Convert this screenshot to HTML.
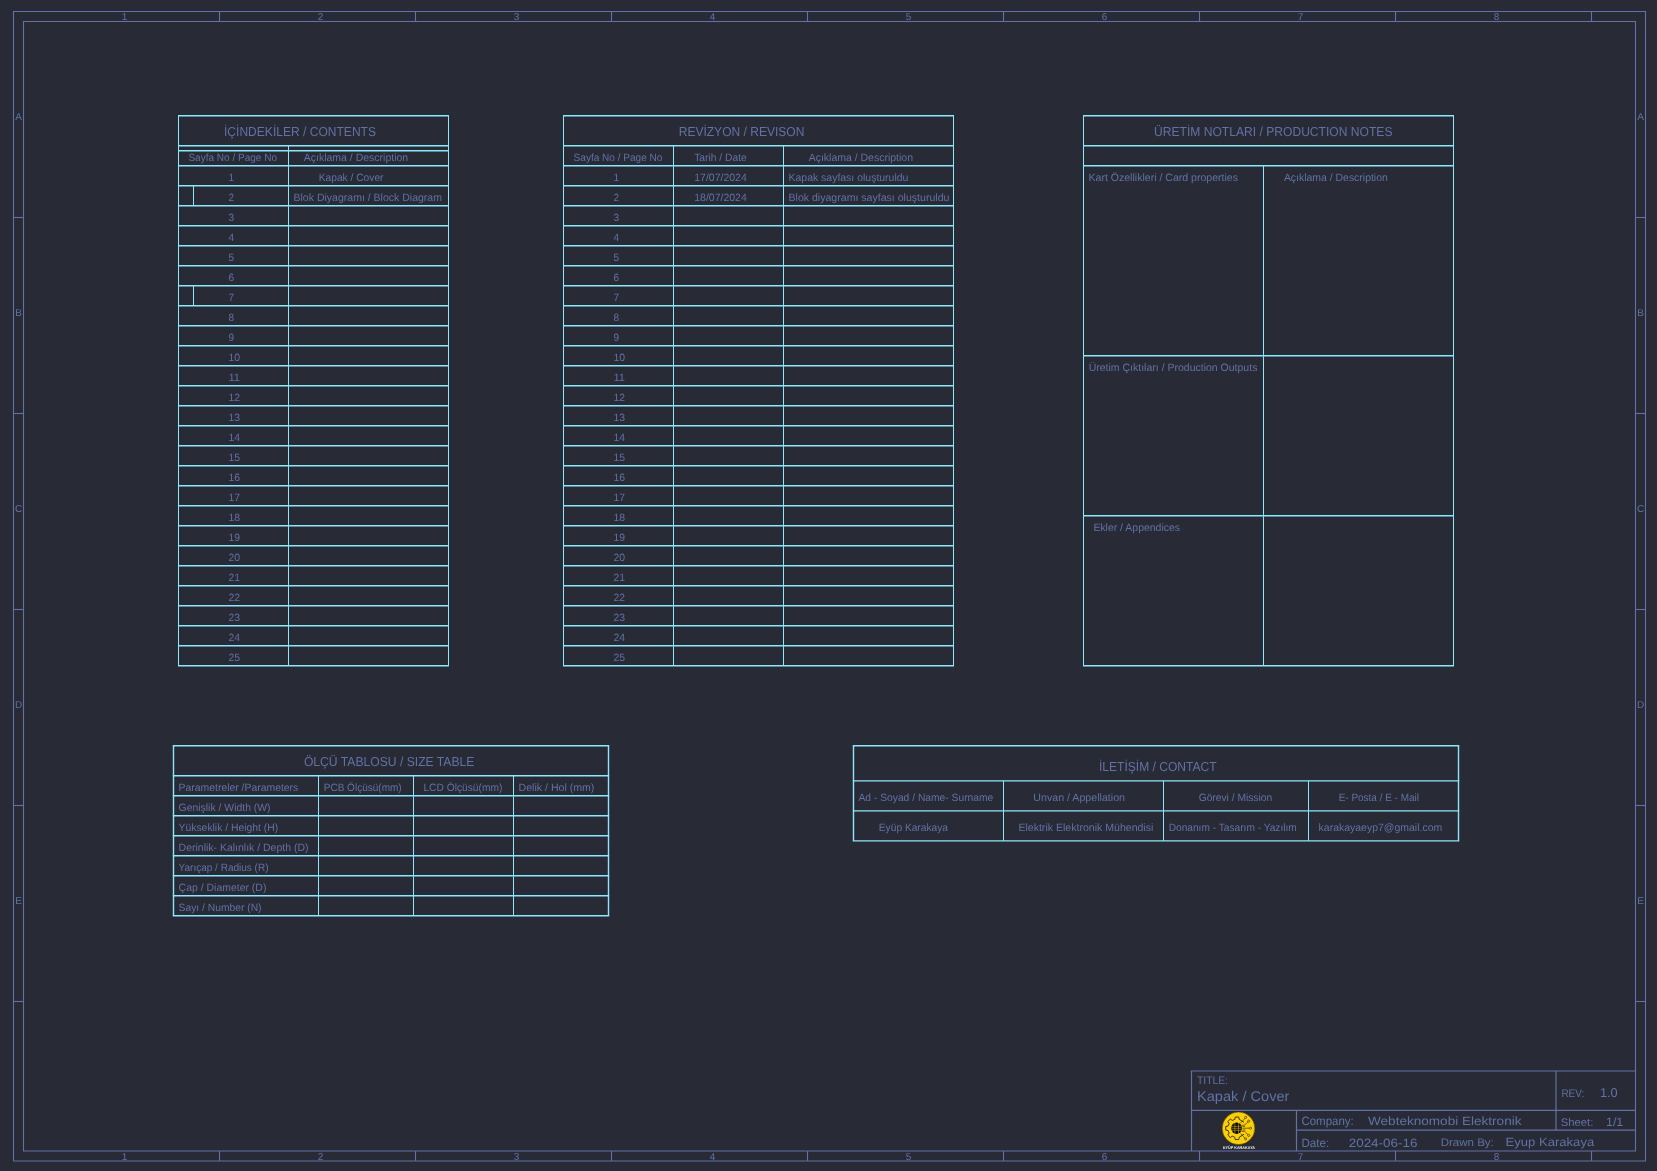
<!DOCTYPE html>
<html><head><meta charset="utf-8"><style>
html,body{margin:0;padding:0;background:#282a36;}
body{width:1657px;height:1171px;overflow:hidden;}
svg{display:block;will-change:transform;text-rendering:geometricPrecision;font-family:"Liberation Sans",sans-serif;}
</style></head><body>
<svg width="1657" height="1171" viewBox="0 0 1657 1171">
<rect x="0" y="0" width="1657" height="1171" fill="#282a36"/>
<line x1="12.95" y1="11.5" x2="1646.05" y2="11.5" stroke="#6272a4" stroke-width="1.1" stroke-linecap="butt"/>
<line x1="13.5" y1="11.5" x2="13.5" y2="1161" stroke="#6272a4" stroke-width="1.1" stroke-linecap="butt"/>
<line x1="1645.5" y1="11.5" x2="1645.5" y2="1161" stroke="#6272a4" stroke-width="1.1" stroke-linecap="butt"/>
<line x1="12.95" y1="1161" x2="1646.05" y2="1161" stroke="#6272a4" stroke-width="1.1" stroke-linecap="butt"/>
<line x1="22.95" y1="21.5" x2="1636.05" y2="21.5" stroke="#6272a4" stroke-width="1.1" stroke-linecap="butt"/>
<line x1="23.5" y1="21.5" x2="23.5" y2="1151" stroke="#6272a4" stroke-width="1.1" stroke-linecap="butt"/>
<line x1="1635.5" y1="21.5" x2="1635.5" y2="1151" stroke="#6272a4" stroke-width="1.1" stroke-linecap="butt"/>
<line x1="22.95" y1="1151" x2="1636.05" y2="1151" stroke="#6272a4" stroke-width="1.1" stroke-linecap="butt"/>
<line x1="219.5" y1="11.5" x2="219.5" y2="21.5" stroke="#6272a4" stroke-width="1.1" stroke-linecap="butt"/>
<line x1="219.5" y1="1151" x2="219.5" y2="1161" stroke="#6272a4" stroke-width="1.1" stroke-linecap="butt"/>
<line x1="415.5" y1="11.5" x2="415.5" y2="21.5" stroke="#6272a4" stroke-width="1.1" stroke-linecap="butt"/>
<line x1="415.5" y1="1151" x2="415.5" y2="1161" stroke="#6272a4" stroke-width="1.1" stroke-linecap="butt"/>
<line x1="611.5" y1="11.5" x2="611.5" y2="21.5" stroke="#6272a4" stroke-width="1.1" stroke-linecap="butt"/>
<line x1="611.5" y1="1151" x2="611.5" y2="1161" stroke="#6272a4" stroke-width="1.1" stroke-linecap="butt"/>
<line x1="807.5" y1="11.5" x2="807.5" y2="21.5" stroke="#6272a4" stroke-width="1.1" stroke-linecap="butt"/>
<line x1="807.5" y1="1151" x2="807.5" y2="1161" stroke="#6272a4" stroke-width="1.1" stroke-linecap="butt"/>
<line x1="1003.5" y1="11.5" x2="1003.5" y2="21.5" stroke="#6272a4" stroke-width="1.1" stroke-linecap="butt"/>
<line x1="1003.5" y1="1151" x2="1003.5" y2="1161" stroke="#6272a4" stroke-width="1.1" stroke-linecap="butt"/>
<line x1="1199.5" y1="11.5" x2="1199.5" y2="21.5" stroke="#6272a4" stroke-width="1.1" stroke-linecap="butt"/>
<line x1="1199.5" y1="1151" x2="1199.5" y2="1161" stroke="#6272a4" stroke-width="1.1" stroke-linecap="butt"/>
<line x1="1395.5" y1="11.5" x2="1395.5" y2="21.5" stroke="#6272a4" stroke-width="1.1" stroke-linecap="butt"/>
<line x1="1395.5" y1="1151" x2="1395.5" y2="1161" stroke="#6272a4" stroke-width="1.1" stroke-linecap="butt"/>
<line x1="1591.5" y1="11.5" x2="1591.5" y2="21.5" stroke="#6272a4" stroke-width="1.1" stroke-linecap="butt"/>
<line x1="1591.5" y1="1151" x2="1591.5" y2="1161" stroke="#6272a4" stroke-width="1.1" stroke-linecap="butt"/>
<line x1="12.95" y1="217.5" x2="24.05" y2="217.5" stroke="#6272a4" stroke-width="1.1" stroke-linecap="butt"/>
<line x1="1634.95" y1="217.5" x2="1646.05" y2="217.5" stroke="#6272a4" stroke-width="1.1" stroke-linecap="butt"/>
<line x1="12.95" y1="413.5" x2="24.05" y2="413.5" stroke="#6272a4" stroke-width="1.1" stroke-linecap="butt"/>
<line x1="1634.95" y1="413.5" x2="1646.05" y2="413.5" stroke="#6272a4" stroke-width="1.1" stroke-linecap="butt"/>
<line x1="12.95" y1="609.5" x2="24.05" y2="609.5" stroke="#6272a4" stroke-width="1.1" stroke-linecap="butt"/>
<line x1="1634.95" y1="609.5" x2="1646.05" y2="609.5" stroke="#6272a4" stroke-width="1.1" stroke-linecap="butt"/>
<line x1="12.95" y1="805.5" x2="24.05" y2="805.5" stroke="#6272a4" stroke-width="1.1" stroke-linecap="butt"/>
<line x1="1634.95" y1="805.5" x2="1646.05" y2="805.5" stroke="#6272a4" stroke-width="1.1" stroke-linecap="butt"/>
<line x1="12.95" y1="1001.5" x2="24.05" y2="1001.5" stroke="#6272a4" stroke-width="1.1" stroke-linecap="butt"/>
<line x1="1634.95" y1="1001.5" x2="1646.05" y2="1001.5" stroke="#6272a4" stroke-width="1.1" stroke-linecap="butt"/>
<text x="124.5" y="20" font-size="10.00" fill="#6272a4" text-anchor="middle">1</text>
<text x="124.5" y="1159.5" font-size="10.00" fill="#6272a4" text-anchor="middle">1</text>
<text x="320.5" y="20" font-size="10.00" fill="#6272a4" text-anchor="middle">2</text>
<text x="320.5" y="1159.5" font-size="10.00" fill="#6272a4" text-anchor="middle">2</text>
<text x="516.5" y="20" font-size="10.00" fill="#6272a4" text-anchor="middle">3</text>
<text x="516.5" y="1159.5" font-size="10.00" fill="#6272a4" text-anchor="middle">3</text>
<text x="712.5" y="20" font-size="10.00" fill="#6272a4" text-anchor="middle">4</text>
<text x="712.5" y="1159.5" font-size="10.00" fill="#6272a4" text-anchor="middle">4</text>
<text x="908.5" y="20" font-size="10.00" fill="#6272a4" text-anchor="middle">5</text>
<text x="908.5" y="1159.5" font-size="10.00" fill="#6272a4" text-anchor="middle">5</text>
<text x="1104.5" y="20" font-size="10.00" fill="#6272a4" text-anchor="middle">6</text>
<text x="1104.5" y="1159.5" font-size="10.00" fill="#6272a4" text-anchor="middle">6</text>
<text x="1300.5" y="20" font-size="10.00" fill="#6272a4" text-anchor="middle">7</text>
<text x="1300.5" y="1159.5" font-size="10.00" fill="#6272a4" text-anchor="middle">7</text>
<text x="1496.5" y="20" font-size="10.00" fill="#6272a4" text-anchor="middle">8</text>
<text x="1496.5" y="1159.5" font-size="10.00" fill="#6272a4" text-anchor="middle">8</text>
<text x="18.5" y="119.5" font-size="10.00" fill="#6272a4" text-anchor="middle">A</text>
<text x="1640.5" y="119.5" font-size="10.00" fill="#6272a4" text-anchor="middle">A</text>
<text x="18.5" y="315.5" font-size="10.00" fill="#6272a4" text-anchor="middle">B</text>
<text x="1640.5" y="315.5" font-size="10.00" fill="#6272a4" text-anchor="middle">B</text>
<text x="18.5" y="511.5" font-size="10.00" fill="#6272a4" text-anchor="middle">C</text>
<text x="1640.5" y="511.5" font-size="10.00" fill="#6272a4" text-anchor="middle">C</text>
<text x="18.5" y="707.5" font-size="10.00" fill="#6272a4" text-anchor="middle">D</text>
<text x="1640.5" y="707.5" font-size="10.00" fill="#6272a4" text-anchor="middle">D</text>
<text x="18.5" y="903.5" font-size="10.00" fill="#6272a4" text-anchor="middle">E</text>
<text x="1640.5" y="903.5" font-size="10.00" fill="#6272a4" text-anchor="middle">E</text>
<line x1="178.0" y1="115.7" x2="449.0" y2="115.7" stroke="#8be9fd" stroke-width="1.4" stroke-linecap="butt"/>
<line x1="178.0" y1="665.7" x2="449.0" y2="665.7" stroke="#8be9fd" stroke-width="1.4" stroke-linecap="butt"/>
<line x1="178.5" y1="115.5" x2="178.5" y2="665.5" stroke="#8be9fd" stroke-width="1.0" stroke-linecap="butt"/>
<line x1="448.5" y1="115.5" x2="448.5" y2="665.5" stroke="#8be9fd" stroke-width="1.0" stroke-linecap="butt"/>
<line x1="178.0" y1="145.7" x2="449.0" y2="145.7" stroke="#8be9fd" stroke-width="1.4" stroke-linecap="butt"/>
<line x1="178.0" y1="150.7" x2="449.0" y2="150.7" stroke="#8be9fd" stroke-width="1.4" stroke-linecap="butt"/>
<line x1="178.0" y1="165.7" x2="449.0" y2="165.7" stroke="#8be9fd" stroke-width="1.4" stroke-linecap="butt"/>
<line x1="178.0" y1="185.7" x2="449.0" y2="185.7" stroke="#8be9fd" stroke-width="1.4" stroke-linecap="butt"/>
<line x1="178.0" y1="205.7" x2="449.0" y2="205.7" stroke="#8be9fd" stroke-width="1.4" stroke-linecap="butt"/>
<line x1="178.0" y1="225.7" x2="449.0" y2="225.7" stroke="#8be9fd" stroke-width="1.4" stroke-linecap="butt"/>
<line x1="178.0" y1="245.7" x2="449.0" y2="245.7" stroke="#8be9fd" stroke-width="1.4" stroke-linecap="butt"/>
<line x1="178.0" y1="265.7" x2="449.0" y2="265.7" stroke="#8be9fd" stroke-width="1.4" stroke-linecap="butt"/>
<line x1="178.0" y1="285.7" x2="449.0" y2="285.7" stroke="#8be9fd" stroke-width="1.4" stroke-linecap="butt"/>
<line x1="178.0" y1="305.7" x2="449.0" y2="305.7" stroke="#8be9fd" stroke-width="1.4" stroke-linecap="butt"/>
<line x1="178.0" y1="325.7" x2="449.0" y2="325.7" stroke="#8be9fd" stroke-width="1.4" stroke-linecap="butt"/>
<line x1="178.0" y1="345.7" x2="449.0" y2="345.7" stroke="#8be9fd" stroke-width="1.4" stroke-linecap="butt"/>
<line x1="178.0" y1="365.7" x2="449.0" y2="365.7" stroke="#8be9fd" stroke-width="1.4" stroke-linecap="butt"/>
<line x1="178.0" y1="385.7" x2="449.0" y2="385.7" stroke="#8be9fd" stroke-width="1.4" stroke-linecap="butt"/>
<line x1="178.0" y1="405.7" x2="449.0" y2="405.7" stroke="#8be9fd" stroke-width="1.4" stroke-linecap="butt"/>
<line x1="178.0" y1="425.7" x2="449.0" y2="425.7" stroke="#8be9fd" stroke-width="1.4" stroke-linecap="butt"/>
<line x1="178.0" y1="445.7" x2="449.0" y2="445.7" stroke="#8be9fd" stroke-width="1.4" stroke-linecap="butt"/>
<line x1="178.0" y1="465.7" x2="449.0" y2="465.7" stroke="#8be9fd" stroke-width="1.4" stroke-linecap="butt"/>
<line x1="178.0" y1="485.7" x2="449.0" y2="485.7" stroke="#8be9fd" stroke-width="1.4" stroke-linecap="butt"/>
<line x1="178.0" y1="505.7" x2="449.0" y2="505.7" stroke="#8be9fd" stroke-width="1.4" stroke-linecap="butt"/>
<line x1="178.0" y1="525.7" x2="449.0" y2="525.7" stroke="#8be9fd" stroke-width="1.4" stroke-linecap="butt"/>
<line x1="178.0" y1="545.7" x2="449.0" y2="545.7" stroke="#8be9fd" stroke-width="1.4" stroke-linecap="butt"/>
<line x1="178.0" y1="565.7" x2="449.0" y2="565.7" stroke="#8be9fd" stroke-width="1.4" stroke-linecap="butt"/>
<line x1="178.0" y1="585.7" x2="449.0" y2="585.7" stroke="#8be9fd" stroke-width="1.4" stroke-linecap="butt"/>
<line x1="178.0" y1="605.7" x2="449.0" y2="605.7" stroke="#8be9fd" stroke-width="1.4" stroke-linecap="butt"/>
<line x1="178.0" y1="625.7" x2="449.0" y2="625.7" stroke="#8be9fd" stroke-width="1.4" stroke-linecap="butt"/>
<line x1="178.0" y1="645.7" x2="449.0" y2="645.7" stroke="#8be9fd" stroke-width="1.4" stroke-linecap="butt"/>
<line x1="288.5" y1="145.5" x2="288.5" y2="665.5" stroke="#8be9fd" stroke-width="1.0" stroke-linecap="butt"/>
<line x1="193.5" y1="185.5" x2="193.5" y2="205.5" stroke="#8be9fd" stroke-width="1.0" stroke-linecap="butt"/>
<line x1="193.5" y1="285.5" x2="193.5" y2="305.5" stroke="#8be9fd" stroke-width="1.0" stroke-linecap="butt"/>
<text x="224" y="136" font-size="13.04" fill="#6272a4" textLength="152.0" lengthAdjust="spacingAndGlyphs">İÇİNDEKİLER / CONTENTS</text>
<text x="188.4" y="161" font-size="10.58" fill="#6272a4" textLength="88.6" lengthAdjust="spacingAndGlyphs">Sayfa No / Page No</text>
<text x="303.8" y="161" font-size="10.58" fill="#6272a4" textLength="104.4" lengthAdjust="spacingAndGlyphs">Açıklama / Description</text>
<text x="318.7" y="181" font-size="10.58" fill="#6272a4" textLength="64.8" lengthAdjust="spacingAndGlyphs">Kapak / Cover</text>
<text x="293.5" y="201" font-size="10.58" fill="#6272a4" textLength="148.5" lengthAdjust="spacingAndGlyphs">Blok Diyagramı / Block Diagram</text>
<text x="228.4" y="181" font-size="10.58" fill="#6272a4" textLength="5.6" lengthAdjust="spacingAndGlyphs">1</text>
<text x="228.4" y="201" font-size="10.58" fill="#6272a4" textLength="5.6" lengthAdjust="spacingAndGlyphs">2</text>
<text x="228.4" y="221" font-size="10.58" fill="#6272a4" textLength="5.6" lengthAdjust="spacingAndGlyphs">3</text>
<text x="228.4" y="241" font-size="10.58" fill="#6272a4" textLength="5.6" lengthAdjust="spacingAndGlyphs">4</text>
<text x="228.4" y="261" font-size="10.58" fill="#6272a4" textLength="5.6" lengthAdjust="spacingAndGlyphs">5</text>
<text x="228.4" y="281" font-size="10.58" fill="#6272a4" textLength="5.6" lengthAdjust="spacingAndGlyphs">6</text>
<text x="228.4" y="301" font-size="10.58" fill="#6272a4" textLength="5.6" lengthAdjust="spacingAndGlyphs">7</text>
<text x="228.4" y="321" font-size="10.58" fill="#6272a4" textLength="5.6" lengthAdjust="spacingAndGlyphs">8</text>
<text x="228.4" y="341" font-size="10.58" fill="#6272a4" textLength="5.6" lengthAdjust="spacingAndGlyphs">9</text>
<text x="228.4" y="361" font-size="10.58" fill="#6272a4" textLength="11.6" lengthAdjust="spacingAndGlyphs">10</text>
<text x="228.4" y="381" font-size="10.58" fill="#6272a4" textLength="11.6" lengthAdjust="spacingAndGlyphs">11</text>
<text x="228.4" y="401" font-size="10.58" fill="#6272a4" textLength="11.6" lengthAdjust="spacingAndGlyphs">12</text>
<text x="228.4" y="421" font-size="10.58" fill="#6272a4" textLength="11.6" lengthAdjust="spacingAndGlyphs">13</text>
<text x="228.4" y="441" font-size="10.58" fill="#6272a4" textLength="11.6" lengthAdjust="spacingAndGlyphs">14</text>
<text x="228.4" y="461" font-size="10.58" fill="#6272a4" textLength="11.6" lengthAdjust="spacingAndGlyphs">15</text>
<text x="228.4" y="481" font-size="10.58" fill="#6272a4" textLength="11.6" lengthAdjust="spacingAndGlyphs">16</text>
<text x="228.4" y="501" font-size="10.58" fill="#6272a4" textLength="11.6" lengthAdjust="spacingAndGlyphs">17</text>
<text x="228.4" y="521" font-size="10.58" fill="#6272a4" textLength="11.6" lengthAdjust="spacingAndGlyphs">18</text>
<text x="228.4" y="541" font-size="10.58" fill="#6272a4" textLength="11.6" lengthAdjust="spacingAndGlyphs">19</text>
<text x="228.4" y="561" font-size="10.58" fill="#6272a4" textLength="11.6" lengthAdjust="spacingAndGlyphs">20</text>
<text x="228.4" y="581" font-size="10.58" fill="#6272a4" textLength="11.6" lengthAdjust="spacingAndGlyphs">21</text>
<text x="228.4" y="601" font-size="10.58" fill="#6272a4" textLength="11.6" lengthAdjust="spacingAndGlyphs">22</text>
<text x="228.4" y="621" font-size="10.58" fill="#6272a4" textLength="11.6" lengthAdjust="spacingAndGlyphs">23</text>
<text x="228.4" y="641" font-size="10.58" fill="#6272a4" textLength="11.6" lengthAdjust="spacingAndGlyphs">24</text>
<text x="228.4" y="661" font-size="10.58" fill="#6272a4" textLength="11.6" lengthAdjust="spacingAndGlyphs">25</text>
<line x1="563.0" y1="115.7" x2="954.0" y2="115.7" stroke="#8be9fd" stroke-width="1.4" stroke-linecap="butt"/>
<line x1="563.0" y1="665.7" x2="954.0" y2="665.7" stroke="#8be9fd" stroke-width="1.4" stroke-linecap="butt"/>
<line x1="563.5" y1="115.5" x2="563.5" y2="665.5" stroke="#8be9fd" stroke-width="1.0" stroke-linecap="butt"/>
<line x1="953.5" y1="115.5" x2="953.5" y2="665.5" stroke="#8be9fd" stroke-width="1.0" stroke-linecap="butt"/>
<line x1="563.0" y1="145.7" x2="954.0" y2="145.7" stroke="#8be9fd" stroke-width="1.4" stroke-linecap="butt"/>
<line x1="563.0" y1="165.7" x2="954.0" y2="165.7" stroke="#8be9fd" stroke-width="1.4" stroke-linecap="butt"/>
<line x1="563.0" y1="185.7" x2="954.0" y2="185.7" stroke="#8be9fd" stroke-width="1.4" stroke-linecap="butt"/>
<line x1="563.0" y1="205.7" x2="954.0" y2="205.7" stroke="#8be9fd" stroke-width="1.4" stroke-linecap="butt"/>
<line x1="563.0" y1="225.7" x2="954.0" y2="225.7" stroke="#8be9fd" stroke-width="1.4" stroke-linecap="butt"/>
<line x1="563.0" y1="245.7" x2="954.0" y2="245.7" stroke="#8be9fd" stroke-width="1.4" stroke-linecap="butt"/>
<line x1="563.0" y1="265.7" x2="954.0" y2="265.7" stroke="#8be9fd" stroke-width="1.4" stroke-linecap="butt"/>
<line x1="563.0" y1="285.7" x2="954.0" y2="285.7" stroke="#8be9fd" stroke-width="1.4" stroke-linecap="butt"/>
<line x1="563.0" y1="305.7" x2="954.0" y2="305.7" stroke="#8be9fd" stroke-width="1.4" stroke-linecap="butt"/>
<line x1="563.0" y1="325.7" x2="954.0" y2="325.7" stroke="#8be9fd" stroke-width="1.4" stroke-linecap="butt"/>
<line x1="563.0" y1="345.7" x2="954.0" y2="345.7" stroke="#8be9fd" stroke-width="1.4" stroke-linecap="butt"/>
<line x1="563.0" y1="365.7" x2="954.0" y2="365.7" stroke="#8be9fd" stroke-width="1.4" stroke-linecap="butt"/>
<line x1="563.0" y1="385.7" x2="954.0" y2="385.7" stroke="#8be9fd" stroke-width="1.4" stroke-linecap="butt"/>
<line x1="563.0" y1="405.7" x2="954.0" y2="405.7" stroke="#8be9fd" stroke-width="1.4" stroke-linecap="butt"/>
<line x1="563.0" y1="425.7" x2="954.0" y2="425.7" stroke="#8be9fd" stroke-width="1.4" stroke-linecap="butt"/>
<line x1="563.0" y1="445.7" x2="954.0" y2="445.7" stroke="#8be9fd" stroke-width="1.4" stroke-linecap="butt"/>
<line x1="563.0" y1="465.7" x2="954.0" y2="465.7" stroke="#8be9fd" stroke-width="1.4" stroke-linecap="butt"/>
<line x1="563.0" y1="485.7" x2="954.0" y2="485.7" stroke="#8be9fd" stroke-width="1.4" stroke-linecap="butt"/>
<line x1="563.0" y1="505.7" x2="954.0" y2="505.7" stroke="#8be9fd" stroke-width="1.4" stroke-linecap="butt"/>
<line x1="563.0" y1="525.7" x2="954.0" y2="525.7" stroke="#8be9fd" stroke-width="1.4" stroke-linecap="butt"/>
<line x1="563.0" y1="545.7" x2="954.0" y2="545.7" stroke="#8be9fd" stroke-width="1.4" stroke-linecap="butt"/>
<line x1="563.0" y1="565.7" x2="954.0" y2="565.7" stroke="#8be9fd" stroke-width="1.4" stroke-linecap="butt"/>
<line x1="563.0" y1="585.7" x2="954.0" y2="585.7" stroke="#8be9fd" stroke-width="1.4" stroke-linecap="butt"/>
<line x1="563.0" y1="605.7" x2="954.0" y2="605.7" stroke="#8be9fd" stroke-width="1.4" stroke-linecap="butt"/>
<line x1="563.0" y1="625.7" x2="954.0" y2="625.7" stroke="#8be9fd" stroke-width="1.4" stroke-linecap="butt"/>
<line x1="563.0" y1="645.7" x2="954.0" y2="645.7" stroke="#8be9fd" stroke-width="1.4" stroke-linecap="butt"/>
<line x1="673.5" y1="145.5" x2="673.5" y2="665.5" stroke="#8be9fd" stroke-width="1.0" stroke-linecap="butt"/>
<line x1="783.5" y1="145.5" x2="783.5" y2="665.5" stroke="#8be9fd" stroke-width="1.0" stroke-linecap="butt"/>
<text x="678.7" y="136" font-size="13.04" fill="#6272a4" textLength="125.7" lengthAdjust="spacingAndGlyphs">REVİZYON / REVISON</text>
<text x="573.6" y="161" font-size="10.58" fill="#6272a4" textLength="88.8" lengthAdjust="spacingAndGlyphs">Sayfa No / Page No</text>
<text x="694.2" y="161" font-size="10.58" fill="#6272a4" textLength="52.6" lengthAdjust="spacingAndGlyphs">Tarih / Date</text>
<text x="808.7" y="161" font-size="10.58" fill="#6272a4" textLength="104.3" lengthAdjust="spacingAndGlyphs">Açıklama / Description</text>
<text x="694.2" y="181" font-size="10.58" fill="#6272a4" textLength="52.6" lengthAdjust="spacingAndGlyphs">17/07/2024</text>
<text x="694.2" y="201" font-size="10.58" fill="#6272a4" textLength="52.6" lengthAdjust="spacingAndGlyphs">18/07/2024</text>
<text x="788.5" y="181" font-size="10.58" fill="#6272a4" textLength="119.9" lengthAdjust="spacingAndGlyphs">Kapak sayfası oluşturuldu</text>
<text x="788.5" y="201" font-size="10.58" fill="#6272a4" textLength="160.9" lengthAdjust="spacingAndGlyphs">Blok diyagramı sayfası oluşturuldu</text>
<text x="613.4" y="181" font-size="10.58" fill="#6272a4" textLength="5.6" lengthAdjust="spacingAndGlyphs">1</text>
<text x="613.4" y="201" font-size="10.58" fill="#6272a4" textLength="5.6" lengthAdjust="spacingAndGlyphs">2</text>
<text x="613.4" y="221" font-size="10.58" fill="#6272a4" textLength="5.6" lengthAdjust="spacingAndGlyphs">3</text>
<text x="613.4" y="241" font-size="10.58" fill="#6272a4" textLength="5.6" lengthAdjust="spacingAndGlyphs">4</text>
<text x="613.4" y="261" font-size="10.58" fill="#6272a4" textLength="5.6" lengthAdjust="spacingAndGlyphs">5</text>
<text x="613.4" y="281" font-size="10.58" fill="#6272a4" textLength="5.6" lengthAdjust="spacingAndGlyphs">6</text>
<text x="613.4" y="301" font-size="10.58" fill="#6272a4" textLength="5.6" lengthAdjust="spacingAndGlyphs">7</text>
<text x="613.4" y="321" font-size="10.58" fill="#6272a4" textLength="5.6" lengthAdjust="spacingAndGlyphs">8</text>
<text x="613.4" y="341" font-size="10.58" fill="#6272a4" textLength="5.6" lengthAdjust="spacingAndGlyphs">9</text>
<text x="613.4" y="361" font-size="10.58" fill="#6272a4" textLength="11.6" lengthAdjust="spacingAndGlyphs">10</text>
<text x="613.4" y="381" font-size="10.58" fill="#6272a4" textLength="11.6" lengthAdjust="spacingAndGlyphs">11</text>
<text x="613.4" y="401" font-size="10.58" fill="#6272a4" textLength="11.6" lengthAdjust="spacingAndGlyphs">12</text>
<text x="613.4" y="421" font-size="10.58" fill="#6272a4" textLength="11.6" lengthAdjust="spacingAndGlyphs">13</text>
<text x="613.4" y="441" font-size="10.58" fill="#6272a4" textLength="11.6" lengthAdjust="spacingAndGlyphs">14</text>
<text x="613.4" y="461" font-size="10.58" fill="#6272a4" textLength="11.6" lengthAdjust="spacingAndGlyphs">15</text>
<text x="613.4" y="481" font-size="10.58" fill="#6272a4" textLength="11.6" lengthAdjust="spacingAndGlyphs">16</text>
<text x="613.4" y="501" font-size="10.58" fill="#6272a4" textLength="11.6" lengthAdjust="spacingAndGlyphs">17</text>
<text x="613.4" y="521" font-size="10.58" fill="#6272a4" textLength="11.6" lengthAdjust="spacingAndGlyphs">18</text>
<text x="613.4" y="541" font-size="10.58" fill="#6272a4" textLength="11.6" lengthAdjust="spacingAndGlyphs">19</text>
<text x="613.4" y="561" font-size="10.58" fill="#6272a4" textLength="11.6" lengthAdjust="spacingAndGlyphs">20</text>
<text x="613.4" y="581" font-size="10.58" fill="#6272a4" textLength="11.6" lengthAdjust="spacingAndGlyphs">21</text>
<text x="613.4" y="601" font-size="10.58" fill="#6272a4" textLength="11.6" lengthAdjust="spacingAndGlyphs">22</text>
<text x="613.4" y="621" font-size="10.58" fill="#6272a4" textLength="11.6" lengthAdjust="spacingAndGlyphs">23</text>
<text x="613.4" y="641" font-size="10.58" fill="#6272a4" textLength="11.6" lengthAdjust="spacingAndGlyphs">24</text>
<text x="613.4" y="661" font-size="10.58" fill="#6272a4" textLength="11.6" lengthAdjust="spacingAndGlyphs">25</text>
<line x1="1083.0" y1="115.7" x2="1454.0" y2="115.7" stroke="#8be9fd" stroke-width="1.4" stroke-linecap="butt"/>
<line x1="1083.0" y1="665.7" x2="1454.0" y2="665.7" stroke="#8be9fd" stroke-width="1.4" stroke-linecap="butt"/>
<line x1="1083.5" y1="115.5" x2="1083.5" y2="665.5" stroke="#8be9fd" stroke-width="1.0" stroke-linecap="butt"/>
<line x1="1453.5" y1="115.5" x2="1453.5" y2="665.5" stroke="#8be9fd" stroke-width="1.0" stroke-linecap="butt"/>
<line x1="1083.0" y1="145.7" x2="1454.0" y2="145.7" stroke="#8be9fd" stroke-width="1.4" stroke-linecap="butt"/>
<line x1="1083.0" y1="165.7" x2="1454.0" y2="165.7" stroke="#8be9fd" stroke-width="1.4" stroke-linecap="butt"/>
<line x1="1083.0" y1="355.7" x2="1454.0" y2="355.7" stroke="#8be9fd" stroke-width="1.4" stroke-linecap="butt"/>
<line x1="1083.0" y1="515.7" x2="1454.0" y2="515.7" stroke="#8be9fd" stroke-width="1.4" stroke-linecap="butt"/>
<line x1="1263.5" y1="165.5" x2="1263.5" y2="665.5" stroke="#8be9fd" stroke-width="1.0" stroke-linecap="butt"/>
<text x="1154" y="136" font-size="13.04" fill="#6272a4" textLength="238.5" lengthAdjust="spacingAndGlyphs">ÜRETİM NOTLARI / PRODUCTION NOTES</text>
<text x="1088.5" y="181" font-size="10.58" fill="#6272a4" textLength="149.5" lengthAdjust="spacingAndGlyphs">Kart Özellikleri / Card properties</text>
<text x="1283.9" y="181" font-size="10.58" fill="#6272a4" textLength="103.9" lengthAdjust="spacingAndGlyphs">Açıklama / Description</text>
<text x="1088.7" y="371" font-size="10.58" fill="#6272a4" textLength="168.7" lengthAdjust="spacingAndGlyphs">Üretim Çıktıları / Production Outputs</text>
<text x="1093.4" y="531" font-size="10.58" fill="#6272a4" textLength="86.6" lengthAdjust="spacingAndGlyphs">Ekler / Appendices</text>
<line x1="172.8" y1="745.8" x2="609.2" y2="745.8" stroke="#8be9fd" stroke-width="1.4" stroke-linecap="butt"/>
<line x1="172.8" y1="915.8" x2="609.2" y2="915.8" stroke="#8be9fd" stroke-width="1.4" stroke-linecap="butt"/>
<line x1="173.5" y1="745.8" x2="173.5" y2="915.8" stroke="#8be9fd" stroke-width="1.4" stroke-linecap="butt"/>
<line x1="608.5" y1="745.8" x2="608.5" y2="915.8" stroke="#8be9fd" stroke-width="1.4" stroke-linecap="butt"/>
<line x1="172.8" y1="775.8" x2="609.2" y2="775.8" stroke="#8be9fd" stroke-width="1.4" stroke-linecap="butt"/>
<line x1="172.8" y1="795.8" x2="609.2" y2="795.8" stroke="#8be9fd" stroke-width="1.4" stroke-linecap="butt"/>
<line x1="172.8" y1="815.8" x2="609.2" y2="815.8" stroke="#8be9fd" stroke-width="1.4" stroke-linecap="butt"/>
<line x1="172.8" y1="835.8" x2="609.2" y2="835.8" stroke="#8be9fd" stroke-width="1.4" stroke-linecap="butt"/>
<line x1="172.8" y1="855.8" x2="609.2" y2="855.8" stroke="#8be9fd" stroke-width="1.4" stroke-linecap="butt"/>
<line x1="172.8" y1="875.8" x2="609.2" y2="875.8" stroke="#8be9fd" stroke-width="1.4" stroke-linecap="butt"/>
<line x1="172.8" y1="895.8" x2="609.2" y2="895.8" stroke="#8be9fd" stroke-width="1.4" stroke-linecap="butt"/>
<line x1="318.5" y1="775.8" x2="318.5" y2="915.8" stroke="#8be9fd" stroke-width="1.0" stroke-linecap="butt"/>
<line x1="413.5" y1="775.8" x2="413.5" y2="915.8" stroke="#8be9fd" stroke-width="1.0" stroke-linecap="butt"/>
<line x1="513.5" y1="775.8" x2="513.5" y2="915.8" stroke="#8be9fd" stroke-width="1.0" stroke-linecap="butt"/>
<text x="303.9" y="766" font-size="13.04" fill="#6272a4" textLength="170.5" lengthAdjust="spacingAndGlyphs">ÖLÇÜ TABLOSU / SIZE TABLE</text>
<text x="178.6" y="791" font-size="10.58" fill="#6272a4" textLength="119.7" lengthAdjust="spacingAndGlyphs">Parametreler /Parameters</text>
<text x="323.75" y="791" font-size="10.58" fill="#6272a4" textLength="77.9" lengthAdjust="spacingAndGlyphs">PCB Ölçüsü(mm)</text>
<text x="423.45" y="791" font-size="10.58" fill="#6272a4" textLength="78.9" lengthAdjust="spacingAndGlyphs">LCD Ölçüsü(mm)</text>
<text x="518.6" y="791" font-size="10.58" fill="#6272a4" textLength="75.8" lengthAdjust="spacingAndGlyphs">Delik / Hol (mm)</text>
<text x="178.6" y="811" font-size="10.58" fill="#6272a4" textLength="92.0" lengthAdjust="spacingAndGlyphs">Genişlik / Width (W)</text>
<text x="178.6" y="831" font-size="10.58" fill="#6272a4" textLength="99.6" lengthAdjust="spacingAndGlyphs">Yükseklik / Height (H)</text>
<text x="178.6" y="851" font-size="10.58" fill="#6272a4" textLength="129.9" lengthAdjust="spacingAndGlyphs">Derinlik- Kalınlık / Depth (D)</text>
<text x="178.6" y="871" font-size="10.58" fill="#6272a4" textLength="89.9" lengthAdjust="spacingAndGlyphs">Yarıçap / Radius (R)</text>
<text x="178.6" y="891" font-size="10.58" fill="#6272a4" textLength="87.8" lengthAdjust="spacingAndGlyphs">Çap / Diameter (D)</text>
<text x="178.6" y="911" font-size="10.58" fill="#6272a4" textLength="82.9" lengthAdjust="spacingAndGlyphs">Sayı / Number (N)</text>
<line x1="852.8" y1="745.8" x2="1459.2" y2="745.8" stroke="#8be9fd" stroke-width="1.4" stroke-linecap="butt"/>
<line x1="852.8" y1="840.9" x2="1459.2" y2="840.9" stroke="#8be9fd" stroke-width="1.4" stroke-linecap="butt"/>
<line x1="853.5" y1="745.8" x2="853.5" y2="840.9" stroke="#8be9fd" stroke-width="1.4" stroke-linecap="butt"/>
<line x1="1458.5" y1="745.8" x2="1458.5" y2="840.9" stroke="#8be9fd" stroke-width="1.4" stroke-linecap="butt"/>
<line x1="852.8" y1="780.9" x2="1459.2" y2="780.9" stroke="#8be9fd" stroke-width="1.4" stroke-linecap="butt"/>
<line x1="852.8" y1="810.9" x2="1459.2" y2="810.9" stroke="#8be9fd" stroke-width="1.4" stroke-linecap="butt"/>
<line x1="1003.5" y1="780.9" x2="1003.5" y2="840.9" stroke="#8be9fd" stroke-width="1.0" stroke-linecap="butt"/>
<line x1="1163.5" y1="780.9" x2="1163.5" y2="840.9" stroke="#8be9fd" stroke-width="1.0" stroke-linecap="butt"/>
<line x1="1308.5" y1="780.9" x2="1308.5" y2="840.9" stroke="#8be9fd" stroke-width="1.0" stroke-linecap="butt"/>
<text x="1099" y="771.2" font-size="13.04" fill="#6272a4" textLength="117.6" lengthAdjust="spacingAndGlyphs">İLETİŞİM / CONTACT</text>
<text x="858.5" y="801" font-size="10.58" fill="#6272a4" textLength="134.8" lengthAdjust="spacingAndGlyphs">Ad - Soyad / Name- Surname</text>
<text x="1033.3" y="801" font-size="10.58" fill="#6272a4" textLength="91.7" lengthAdjust="spacingAndGlyphs">Unvan / Appellation</text>
<text x="1198.7" y="801" font-size="10.58" fill="#6272a4" textLength="73.5" lengthAdjust="spacingAndGlyphs">Görevi / Mission</text>
<text x="1338.7" y="801" font-size="10.58" fill="#6272a4" textLength="80.3" lengthAdjust="spacingAndGlyphs">E- Posta / E - Mail</text>
<text x="878.8" y="831" font-size="10.58" fill="#6272a4" textLength="69.2" lengthAdjust="spacingAndGlyphs">Eyüp Karakaya</text>
<text x="1018.4" y="831" font-size="10.58" fill="#6272a4" textLength="135.0" lengthAdjust="spacingAndGlyphs">Elektrik Elektronik Mühendisi</text>
<text x="1168.7" y="831" font-size="10.58" fill="#6272a4" textLength="128.1" lengthAdjust="spacingAndGlyphs">Donanım - Tasarım - Yazılım</text>
<text x="1318.6" y="831" font-size="10.58" fill="#6272a4" textLength="123.6" lengthAdjust="spacingAndGlyphs">karakayaeyp7@gmail.com</text>
<line x1="1190.9" y1="1071" x2="1636.1" y2="1071" stroke="#6272a4" stroke-width="1.2" stroke-linecap="butt"/>
<line x1="1191.5" y1="1071" x2="1191.5" y2="1151" stroke="#6272a4" stroke-width="1.2" stroke-linecap="butt"/>
<line x1="1190.9" y1="1110.3" x2="1636.1" y2="1110.3" stroke="#6272a4" stroke-width="1.2" stroke-linecap="butt"/>
<line x1="1295.9" y1="1130.2" x2="1636.1" y2="1130.2" stroke="#6272a4" stroke-width="1.2" stroke-linecap="butt"/>
<line x1="1296.5" y1="1110.3" x2="1296.5" y2="1151" stroke="#6272a4" stroke-width="1.2" stroke-linecap="butt"/>
<line x1="1556.0" y1="1071" x2="1556.0" y2="1130.2" stroke="#6272a4" stroke-width="1.2" stroke-linecap="butt"/>
<text x="1197" y="1083.6" font-size="11.01" fill="#6272a4" textLength="31.0" lengthAdjust="spacingAndGlyphs">TITLE:</text>
<text x="1197" y="1101.3" font-size="14.06" fill="#6272a4" textLength="92.4" lengthAdjust="spacingAndGlyphs">Kapak / Cover</text>
<text x="1561.4" y="1097" font-size="11.01" fill="#6272a4" textLength="23.0" lengthAdjust="spacingAndGlyphs">REV:</text>
<text x="1599.9" y="1097.3" font-size="12.90" fill="#6272a4" textLength="17.8" lengthAdjust="spacingAndGlyphs">1.0</text>
<text x="1301.4" y="1124.5" font-size="12.03" fill="#6272a4" textLength="52.4" lengthAdjust="spacingAndGlyphs">Company:</text>
<text x="1368" y="1124.6" font-size="12.03" fill="#6272a4" textLength="153.5" lengthAdjust="spacingAndGlyphs">Webteknomobi Elektronik</text>
<text x="1560.7" y="1126" font-size="11.01" fill="#6272a4" textLength="32.7" lengthAdjust="spacingAndGlyphs">Sheet:</text>
<text x="1606" y="1126" font-size="12.03" fill="#6272a4" textLength="17.3" lengthAdjust="spacingAndGlyphs">1/1</text>
<text x="1301.4" y="1146.5" font-size="12.03" fill="#6272a4" textLength="27.8" lengthAdjust="spacingAndGlyphs">Date:</text>
<text x="1348.7" y="1146.5" font-size="12.03" fill="#6272a4" textLength="68.8" lengthAdjust="spacingAndGlyphs">2024-06-16</text>
<text x="1440.7" y="1146" font-size="11.01" fill="#6272a4" textLength="53.1" lengthAdjust="spacingAndGlyphs">Drawn By:</text>
<text x="1505.6" y="1146.3" font-size="12.03" fill="#6272a4" textLength="88.6" lengthAdjust="spacingAndGlyphs">Eyup Karakaya</text>

<g>
<circle cx="1238.5" cy="1128.3" r="16.3" fill="#ffd000" stroke="#4a3d00" stroke-width="0.5"/>
<path d="M1244.05 1122.39 L1239.23 1119.37 L1238.78 1117.04 L1235.22 1117.04 L1234.77 1119.37 L1232.26 1120.41 L1230.30 1119.08 L1227.78 1121.60 L1229.11 1123.56 L1228.07 1126.07 L1225.74 1126.52 L1225.74 1130.08 L1228.07 1130.53 L1229.11 1133.04 L1227.78 1135.00 L1230.30 1137.52 L1232.26 1136.19 L1234.77 1137.23 L1235.22 1139.56 L1238.78 1139.56 L1239.23 1137.23 L1244.05 1134.21" stroke="#1a1a1a" stroke-width="0.85" fill="none" stroke-linejoin="round"/>
<ellipse cx="1236.6" cy="1128.2" rx="5.4" ry="5.8" fill="#0d0d0d"/>
<path d="M1231.8 1126.3h9.8M1231.5 1128.3h10.4M1231.8 1130.3h9.8M1234.9 1122.9v10.8M1238.5 1122.9v10.8" stroke="#ffd000" stroke-width="0.45" fill="none"/>
<path d="M1240.6 1123.2 L1245.1 1118.1 M1241.6 1125.2 h3 l3.5 -3.4 M1242.2 1128.2 h7.3 M1241.6 1131.4 h3 l3.5 3.4 M1240.6 1133.4 L1245.1 1138.4 M1242.5 1126.5 h2.5 M1242.5 1130 h3" stroke="#1a1a1a" stroke-width="0.6" fill="none"/>
<g fill="none" stroke="#1a1a1a" stroke-width="0.55">
<circle cx="1245.7" cy="1117.4" r="1.1"/>
<circle cx="1248.7" cy="1121.2" r="1.1"/>
<circle cx="1250.6" cy="1128.2" r="1.1"/>
<circle cx="1248.7" cy="1135.4" r="1.1"/>
<circle cx="1245.6" cy="1138.9" r="1.1"/>
</g>
<text x="1223" y="1149.3" font-size="4.2" font-weight="bold" fill="#f0f0f0" textLength="32" lengthAdjust="spacingAndGlyphs">EYÜP KARAKAYA</text>
</g>
</svg></body></html>
